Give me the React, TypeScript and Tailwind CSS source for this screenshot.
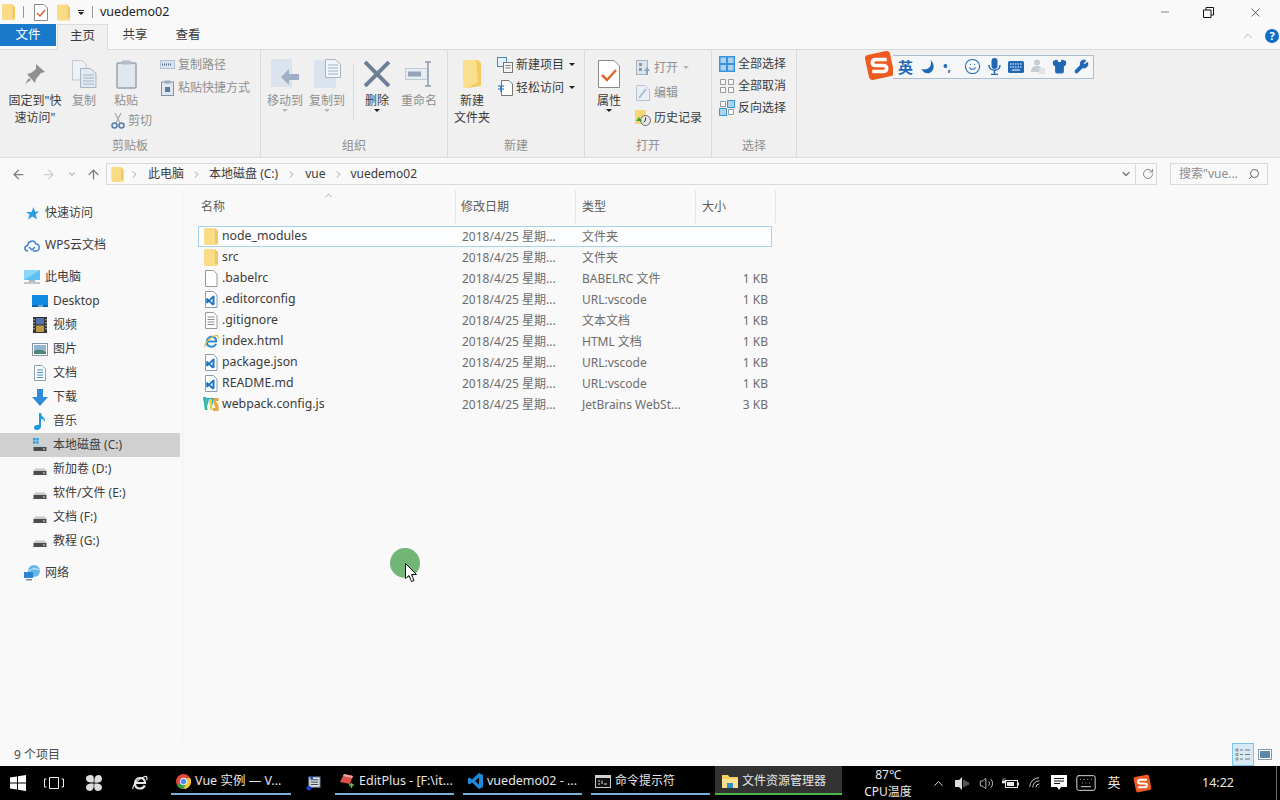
import {
  ArrowLeft, ArrowRight, ArrowUp, ChevronDown, ChevronRight, ChevronUp, Keyboard, Minus,
  RotateCw, Search, Shirt, Smile, Volume2, Wifi, Wrench, X,
} from 'lucide-react';
import type { ReactNode } from 'react';

const font = 'font-["Noto_Sans","Noto_Sans_CJK_SC",sans-serif]';

function Folder({ w = 14, h = 17 }: { w?: number; h?: number }) {
  return (
    <svg width={w} height={h} viewBox="0 0 14 17" className="shrink-0">
      <path d="M0 1.5 Q0 0 1.5 0 H11 V15 L14 15 V17 H2 Q0 17 0 15 Z" fill="#f9dc85" />
      <path d="M11 0 L14 3 V15 H11 Z" fill="#f3c85f" />
    </svg>
  );
}

function FileDoc({ lines = false }: { lines?: boolean }) {
  return (
    <svg width="14" height="17" viewBox="0 0 14 17" className="shrink-0">
      <path d="M1.5.5 H9.5 L13 4 V16.5 H1.5 Z" fill="#fff" stroke="#9a9a9a" />
      {lines && <path d="M3.5 5 H10.5 M3.5 7.5 H10.5 M3.5 10 H10.5 M3.5 12.5 H10.5" stroke="#8a8a8a" />}
    </svg>
  );
}

function VsFile() {
  return (
    <svg width="14" height="17" viewBox="0 0 14 17" className="shrink-0">
      <path d="M1.5.5 H9.5 L13 4 V16.5 H1.5 Z" fill="#fff" stroke="#8d9bab" />
      <path d="M10.5 4.5 V13.5 L8.5 14.5 L5 11 L3.2 12.5 L2.2 12 V7.5 L3.2 7 L5 8.5 L8.5 5 Z" fill="#1976c4" />
      <path d="M8.5 7.5 L6.3 9.7 L8.5 11.8 Z" fill="#fff" />
    </svg>
  );
}

function IeIcon({ size = 16, color = '#2b8fd6' }: { size?: number; color?: string }) {
  return (
    <svg width={size} height={size} viewBox="0 0 16 16" className="shrink-0">
      <path d="M3 8 H13 C13 4.5 10.5 3 8 3 C5 3 3 5.5 3 8.5 C3 11.5 5 13.5 8 13.5 C10 13.5 11.8 12.5 12.8 10.5" fill="none" stroke={color} strokeWidth="2.2" />
      <path d="M1 14 C0 11 5 4 13 1.5 C15 1 15.5 3 14.5 5" fill="none" stroke={color === '#2b8fd6' ? '#e6b93a' : color} strokeWidth="1.2" />
    </svg>
  );
}

function WsIcon() {
  return (
    <svg width="16" height="15" viewBox="0 0 16 15" className="shrink-0">
      <path d="M0 0 H3 L4.5 9 L6 2 H8.5 L9.5 9 L11 1 Z" fill="#25a8c9" />
      <path d="M0 0 H3 L4.5 13 H2 Z" fill="#28b8a8" />
      <path d="M6 2 H8.5 L9.5 13 H7.5 Z" fill="#e5d13b" />
      <path d="M11 1 H15.5 V4 H12.5 L15.5 8 V14 H10 V11 H12.5 L10.5 6 Z" fill="#e8a93a" />
    </svg>
  );
}

function Drive({ win = false }: { win?: boolean }) {
  return (
    <svg width="16" height="16" viewBox="0 0 16 16" className="shrink-0">
      {win && <path d="M1 1 H3.5 V3.5 H1 Z M4.2 1 H6.7 V3.5 H4.2 Z M1 4.2 H3.5 V6.7 H1 Z M4.2 4.2 H6.7 V6.7 H4.2 Z" fill="#2aa3dc" />}
      {!win && <path d="M2 10 C2 8 3 7.5 4 7.5 H12 C13 7.5 14 8 14 10 Z" fill="#c7c7c7" />}
      {win && <path d="M2 10 L3 8 H13 L14 10 Z" fill="#b9cfdb" />}
      <rect x="1.5" y="10" width="13" height="4" fill="#4c4c4c" />
      <rect x="11" y="11.5" width="2" height="1" fill="#e8e8e8" />
    </svg>
  );
}

const navIcons: Record<string, ReactNode> = {
  desktop: (
    <svg width="16" height="14" viewBox="0 0 16 14"><rect width="16" height="12" y="1" fill="#0f8be0" /><rect y="11" width="16" height="2" fill="#0b67ad" /><path d="M6 12 H11" stroke="#cfe9fb" /></svg>
  ),
  video: (
    <svg width="14" height="16" viewBox="0 0 14 16"><rect width="14" height="16" fill="#333" /><rect x="3" y="1" width="8" height="6.5" fill="#5470a8" /><rect x="3" y="8.5" width="8" height="6.5" fill="#b89c45" /><path d="M1 2 V14 M13 2 V14" stroke="#ddd" strokeDasharray="1.5 1.5" /></svg>
  ),
  image: (
    <svg width="16" height="13" viewBox="0 0 16 13"><rect x=".5" y=".5" width="15" height="12" fill="#fff" stroke="#8a97a5" /><rect x="2" y="2" width="12" height="9" fill="#8fb4d4" /><path d="M2 8 Q8 5 14 9 V11 H2 Z" fill="#4e8472" /></svg>
  ),
  doc: (
    <svg width="12" height="16" viewBox="0 0 12 16"><path d="M.5.5 H8 L11.5 4 V15.5 H.5 Z" fill="#fff" stroke="#8ea0b2" /><path d="M3 5 H9 M3 7.5 H9 M3 10 H9 M3 12.5 H9" stroke="#3c8dc9" /></svg>
  ),
  down: (
    <svg width="16" height="17" viewBox="0 0 16 17"><path d="M5 0 H11 V8 H16 L8 17 L0 8 H5 Z" fill="#2f8ad8" /></svg>
  ),
  music: (
    <svg width="12" height="17" viewBox="0 0 12 17"><path d="M5 0 H7 C7 4 12 4.5 11 9 C10 6.5 8.5 6 7 6 V13.5 C7 16 4.5 17 2.5 17 C0.5 17 0 15.5 0 14.5 C0 12.5 3 11.5 5 12 Z" fill="#1f9ae0" /></svg>
  ),
  star: (
    <svg width="14" height="13" viewBox="0 0 14 13"><path d="M8.5 0 L10 4.5 H14 L10.8 7.3 L12 12.5 L7.5 9.5 L3 12.5 L4.5 7.5 L1 5 H6.5 Z" fill="#2f9fe3" /></svg>
  ),
  cloud: (
    <svg width="16" height="13" viewBox="0 0 16 13"><path d="M4 12 C0 12 0 7 3.5 6.5 C4 2 10 0 12 5 C16 5 16.5 12 12 12 H9" fill="none" stroke="#3d80d8" strokeWidth="1.5" /><path d="M5 8 L8 11 L11 8" fill="none" stroke="#3d80d8" strokeWidth="1.5" /></svg>
  ),
  pc: (
    <svg width="16" height="14" viewBox="0 0 16 14"><rect width="16" height="10" fill="#5cc0f2" /><path d="M0 0 H16 L0 10 Z" fill="#8bd6f8" /><rect x="5" y="10" width="6" height="2" fill="#a8b8c4" /><rect y="12.5" width="16" height="1" fill="#8d98a3" /></svg>
  ),
  net: (
    <svg width="16" height="16" viewBox="0 0 16 16"><circle cx="10" cy="6" r="6" fill="#68b6e8" /><path d="M5 6 Q10 2 15 5" stroke="#d8eefa" fill="none" /><rect y="7" width="9" height="6" fill="#2a86d1" /><rect x="2" y="14" width="6" height="1.5" fill="#7c8a96" /></svg>
  ),
};

const navItems = [
  { icon: 'star', label: '快速访问', top: 0, child: false },
  { icon: 'cloud', label: 'WPS云文档', top: 8, child: false },
  { icon: 'pc', label: '此电脑', top: 8, child: false },
  { icon: 'desktop', label: 'Desktop', top: 0, child: true },
  { icon: 'video', label: '视频', top: 0, child: true },
  { icon: 'image', label: '图片', top: 0, child: true },
  { icon: 'doc', label: '文档', top: 0, child: true },
  { icon: 'down', label: '下载', top: 0, child: true },
  { icon: 'music', label: '音乐', top: 0, child: true },
  { icon: 'c', label: '本地磁盘 (C:)', top: 0, child: true },
  { icon: 'd', label: '新加卷 (D:)', top: 0, child: true },
  { icon: 'd', label: '软件/文件 (E:)', top: 0, child: true },
  { icon: 'd', label: '文档 (F:)', top: 0, child: true },
  { icon: 'd', label: '教程 (G:)', top: 0, child: true },
  { icon: 'net', label: '网络', top: 8, child: false },
];

const files: { name: string; type: string; size: string; icon: ReactNode }[] = [
  { name: 'node_modules', type: '文件夹', size: '', icon: <Folder /> },
  { name: 'src', type: '文件夹', size: '', icon: <Folder /> },
  { name: '.babelrc', type: 'BABELRC 文件', size: '1 KB', icon: <FileDoc /> },
  { name: '.editorconfig', type: 'URL:vscode', size: '1 KB', icon: <VsFile /> },
  { name: '.gitignore', type: '文本文档', size: '1 KB', icon: <FileDoc lines /> },
  { name: 'index.html', type: 'HTML 文档', size: '1 KB', icon: <IeIcon size={15} /> },
  { name: 'package.json', type: 'URL:vscode', size: '1 KB', icon: <VsFile /> },
  { name: 'README.md', type: 'URL:vscode', size: '1 KB', icon: <VsFile /> },
  { name: 'webpack.config.js', type: 'JetBrains WebSt...', size: '3 KB', icon: <WsIcon /> },
];

function Caret({ dark = false }: { dark?: boolean }) {
  return <span className={`block h-0 w-0 border-x-[3px] border-t-[3px] border-x-transparent ${dark ? 'border-t-[#222]' : 'border-t-[#b5b5b5]'}`} />;
}

function BigButton({ w, icon, lines, caret, dim }: { w: number; icon: ReactNode; lines: string[]; caret?: 'dark' | 'light'; dim?: boolean }) {
  return (
    <div className="flex shrink-0 flex-col items-center" style={{ width: w }}>
      <div className="flex h-[36px] items-center justify-center">{icon}</div>
      <div className={`text-center text-[12px] leading-[17px] whitespace-nowrap ${dim ? 'text-[#8f8f8f]' : 'text-[#3b3b3b]'}`}>
        {lines.map((l) => (
          <div key={l}>{l}</div>
        ))}
      </div>
      {caret && <Caret dark={caret === 'dark'} />}
    </div>
  );
}

function SmallRow({ icon, label, h, dim, caret, lightCaret }: { icon: ReactNode; label: string; h: number; dim?: boolean; caret?: boolean; lightCaret?: boolean }) {
  return (
    <div className="flex items-center" style={{ height: h }}>
      <span className="flex w-[16px] shrink-0 justify-center">{icon}</span>
      <span className={`ml-[3px] text-[12px] whitespace-nowrap ${dim ? 'text-[#8f8f8f]' : 'text-[#3b3b3b]'}`}>{label}</span>
      {caret && <span className="ml-[5px]"><Caret dark /></span>}
      {lightCaret && <span className="ml-[5px]"><Caret /></span>}
    </div>
  );
}

function Group({ w, label, children }: { w: number; label: string; children: ReactNode }) {
  return (
    <div className="flex shrink-0 flex-col border-r border-[#dadada]" style={{ width: w }}>
      <div className="flex flex-1">{children}</div>
      <div className="mb-[3px] h-[17px] text-center text-[12px] leading-[17px] text-[#8f8f8f]">{label}</div>
    </div>
  );
}

function TaskItem({ w, ml, icon, label, active, cjk }: { w: number; ml: number; icon: ReactNode; label: string; active?: boolean; cjk?: boolean }) {
  return (
    <div
      className={`flex h-[29px] shrink-0 items-center border-b-2 pl-[4px] pt-[3px] ${active ? 'border-[#4cb848] bg-[#333] pl-[7px]' : 'border-[#76b0dc]'}`}
      style={{ width: w, marginLeft: ml }}
    >
      <span className="flex w-[16px] shrink-0 justify-center">{icon}</span>
      <span className={`ml-[4px] whitespace-nowrap text-[#e6e6e6] ${cjk ? 'text-[12px]' : 'text-[12.5px]'}`}>{label}</span>
    </div>
  );
}

function Tray({ w, children }: { w: number; children: ReactNode }) {
  return (
    <div className="flex h-full shrink-0 items-center justify-center text-[#e8e8e8]" style={{ width: w }}>
      {children}
    </div>
  );
}

function SogouS({ size }: { size: number }) {
  return (
    <svg width={size} height={size} viewBox="0 0 28 28">
      <rect x="2.5" y="2.5" width="23" height="23" rx="3" fill="#ef5a1f" transform="rotate(-12 14 14)" />
      <path d="M20.5 8.5 H11 Q7.5 8.5 7.5 11.5 Q7.5 14 11 14 H17 Q20.5 14 20.5 16.5 Q20.5 19.5 17 19.5 H7.5" fill="none" stroke="#fff" strokeWidth="3.2" />
    </svg>
  );
}

export default function App() {
  return (
    <div className={`relative flex h-[800px] w-[1280px] flex-col overflow-hidden bg-[#f9f9f9] ${font}`}>
      {/* title bar */}
      <div className="flex h-[24px] shrink-0 items-center">
        <span className="ml-[2px]"><Folder w={13} h={16} /></span>
        <span className="ml-[8px] h-[12px] w-px bg-[#9a9a9a]" />
        <svg width="14" height="17" viewBox="0 0 14 17" className="ml-[10px]">
          <path d="M.5.5 H10 L13.5 4 V16.5 H.5 Z" fill="#fff" stroke="#8a8a8a" />
          <path d="M3 9 L6 12 L11 6" fill="none" stroke="#d9603a" strokeWidth="1.5" />
        </svg>
        <span className="ml-[9px]"><Folder w={13} h={17} /></span>
        <span className="ml-[8px] flex flex-col items-center gap-[1px]">
          <span className="h-px w-[6px] bg-[#222]" />
          <Caret dark />
        </span>
        <span className="ml-[8px] h-[12px] w-px bg-[#9a9a9a]" />
        <span className="ml-[7px] text-[12.5px] text-[#222]">vuedemo02</span>
        <div className="ml-auto flex items-center">
          <Minus size={12} strokeWidth={1} className="mr-[32px] text-[#111]" />
          <svg width="11" height="11" viewBox="0 0 11 11" className="mr-[34px]">
            <path d="M.5 3 H8 V10.5 H.5 Z M3 3 V.5 H10.5 V8 H8" fill="none" stroke="#111" />
          </svg>
          <X size={15} strokeWidth={1} className="mr-[17px] text-[#111]" />
        </div>
      </div>

      {/* tabs */}
      <div className="relative z-10 -mb-px flex h-[26px] shrink-0 items-stretch text-[12.5px] text-[#3b3b3b]">
        <div className="flex h-[22px] w-[56px] items-center justify-center bg-[#1979ca] text-white">文件</div>
        <div className="ml-px flex w-[51px] items-center justify-center border-x border-t border-[#dadada] bg-[#f0f0f0] pb-[3px]">主页</div>
        <div className="flex w-[54px] items-center justify-center pb-[4px]">共享</div>
        <div className="flex w-[52px] items-center justify-center pb-[4px]">查看</div>
        <div className="ml-auto flex items-center pb-[2px]">
          <ChevronUp size={14} strokeWidth={1.5} className="mr-[10px] text-[#a9a9a9]" />
          <span className="mr-[1px] flex h-[14px] w-[14px] items-center justify-center rounded-full bg-[#0f6fc6] text-[11px] font-bold text-white">?</span>
        </div>
      </div>

      {/* ribbon */}
      <div className="flex h-[109px] shrink-0 border-y border-[#dadada] bg-[#f0f0f0]">
        <Group w={261} label="剪贴板">
          <div className="flex pt-[6px]">
            <div className="ml-[4px]">
              <BigButton
                w={62}
                lines={['固定到"快', '速访问"']}
                icon={
                  <svg width="22" height="22" viewBox="0 0 22 22">
                    <path d="M12 1 L21 9 L17 10 L12 16 L11 20 L3 11 L7 10 L12 6 Z M5 15 L1 21 L7 17 Z" fill="#8f8f8f" />
                  </svg>
                }
              />
            </div>
            <BigButton
              w={36}
              dim
              lines={['复制']}
              icon={
                <svg width="25" height="28" viewBox="0 0 25 28">
                  <path d="M.5.5 H10 L14 4 V20 H.5 Z" fill="#eef1f5" stroke="#c3c9d0" />
                  <path d="M8.5 8.5 H18 L24 13 V27.5 H8.5 Z" fill="#e3e9f1" stroke="#a9b4c0" />
                  <path d="M11 15 H22 M11 18 H22 M11 21 H22 M11 24 H22" stroke="#a3b2c4" />
                </svg>
              }
            />
            <div className="flex w-[53px] flex-col">
              <BigButton
                w={48}
                dim
                lines={['粘贴']}
                icon={
                  <svg width="21" height="29" viewBox="0 0 21 29">
                    <rect x="1" y="3" width="19" height="25" rx="1" fill="#e1e7ef" stroke="#98a2ae" strokeWidth="1.5" />
                    <rect x="6" y="0.5" width="9" height="4" fill="#b4bcc6" />
                  </svg>
                }
              />
              <div className="mt-[3px] flex items-center pl-[9px] text-[12px] leading-[17px] text-[#8f8f8f]">
                <svg width="14" height="16" viewBox="0 0 14 16" className="mr-[3px] shrink-0">
                  <path d="M4 0 L9 10 M10 0 L5 10" stroke="#a5adb6" strokeWidth="1.3" />
                  <circle cx="3.5" cy="12.5" r="2.5" fill="none" stroke="#4f7ea8" strokeWidth="1.5" />
                  <circle cx="10.5" cy="12.5" r="2.5" fill="none" stroke="#4f7ea8" strokeWidth="1.5" />
                </svg>
                剪切
              </div>
            </div>
            <div className="-mt-[3px] flex flex-col pl-[4px]">
              <SmallRow
                h={23}
                dim
                label="复制路径"
                icon={
                  <svg width="15" height="9" viewBox="0 0 15 9"><rect x=".5" y=".5" width="14" height="8" fill="#d7e3f1" stroke="#b2c2d4" /><path d="M2 4.5 H12" stroke="#53718f" strokeDasharray="1 1" strokeWidth="2" /></svg>
                }
              />
              <SmallRow
                h={23}
                dim
                label="粘贴快捷方式"
                icon={
                  <svg width="13" height="16" viewBox="0 0 13 16"><rect x=".5" y="2" width="12" height="13.5" fill="#dfe6ee" stroke="#7f93a8" /><rect x="3.5" y=".5" width="6" height="3" fill="#9eacba" /><path d="M4 7 H9 V12 H4 Z" fill="#5a7c9c" /></svg>
                }
              />
            </div>
          </div>
        </Group>

        <Group w={187} label="组织">
          <div className="flex pl-[3px] pt-[6px]">
            <BigButton
              w={42}
              dim
              caret="light"
              lines={['移动到']}
              icon={
                <svg width="28" height="30" viewBox="0 0 28 30">
                  <rect width="21" height="28" fill="#dbe3ee" />
                  <path d="M28 15 V21 H18 V26 L10 18 L18 10 V15 Z" fill="#9fb0c6" />
                </svg>
              }
            />
            <BigButton
              w={42}
              dim
              caret="light"
              lines={['复制到']}
              icon={
                <svg width="27" height="30" viewBox="0 0 27 30">
                  <rect y="1" width="22" height="28" fill="#dbe3ee" />
                  <path d="M11.5 .5 H21 L26.5 5 V18.5 H11.5 Z" fill="#f2f5f9" stroke="#a9b4c0" />
                  <path d="M14 6 H24 M14 9 H24 M14 12 H24 M14 15 H24" stroke="#9fb0c6" />
                </svg>
              }
            />
            <div className="ml-[5px] mt-[8px] h-[56px] w-px bg-[#dcdcdc]" />
            <BigButton
              w={46}
              caret="dark"
              lines={['删除']}
              icon={
                <svg width="26" height="26" viewBox="0 0 26 26">
                  <path d="M1 1 L25 25 M25 1 L1 25" stroke="#6c7f96" strokeWidth="4" />
                </svg>
              }
            />
            <BigButton
              w={38}
              dim
              lines={['重命名']}
              icon={
                <svg width="28" height="26" viewBox="0 0 28 26">
                  <rect x=".5" y="7.5" width="22" height="11" fill="#e6ecf3" stroke="#c0cad5" />
                  <rect x="3" y="10.5" width="13" height="5" fill="#94a3b5" />
                  <path d="M20 1 H26 M23 1 V25 M20 25 H26" stroke="#8c9aaa" strokeWidth="1.5" />
                </svg>
              }
            />
          </div>
        </Group>

        <Group w={137} label="新建">
          <div className="flex pt-[6px]">
            <BigButton
              w={48}
              lines={['新建', '文件夹']}
              icon={
                <svg width="18" height="28" viewBox="0 0 18 28">
                  <path d="M0 0 H15 L18 3 V26 L4 28 Q0 28 0 24 Z" fill="#f4cb62" />
                  <path d="M0 0 H13 L15 22 L4 28 Q0 28 0 24 Z" fill="#fadf8e" />
                </svg>
              }
            />
            <div className="-mt-[3px] flex flex-col pl-[1px]">
              <SmallRow
                h={23}
                caret
                label="新建项目"
                icon={
                  <svg width="16" height="16" viewBox="0 0 16 16"><rect x=".5" y=".5" width="9" height="9" fill="#e8f2fb" stroke="#4a87bd" /><rect x="6.5" y="5.5" width="9" height="10" fill="#f6f6f6" stroke="#777" /><path d="M8.5 8.5 H13.5 M8.5 11 H13.5" stroke="#777" /></svg>
                }
              />
              <SmallRow
                h={23}
                caret
                label="轻松访问"
                icon={
                  <svg width="15" height="16" viewBox="0 0 15 16"><path d="M3.5 .5 H11 L14.5 4 V15.5 H3.5 Z" fill="#fff" stroke="#777" /><path d="M0 6 H6 M0 9 H6 M3 6 V12" stroke="#1f6fb5" strokeWidth="1.2" /></svg>
                }
              />
            </div>
          </div>
        </Group>

        <Group w={127} label="打开">
          <div className="flex pt-[6px]">
            <BigButton
              w={48}
              caret="dark"
              lines={['属性']}
              icon={
                <svg width="22" height="28" viewBox="0 0 22 28">
                  <path d="M.5.5 H16 L21.5 6 V27.5 H.5 Z" fill="#fff" stroke="#8a8a8a" />
                  <path d="M4 15 L9 20 L18 10" fill="none" stroke="#dd6a2c" strokeWidth="2.5" />
                </svg>
              }
            />
            <div className="-mt-[1px] flex flex-col pl-[2px]">
              <SmallRow
                h={25}
                dim
                lightCaret
                label="打开"
                icon={
                  <svg width="14" height="16" viewBox="0 0 14 16"><rect x=".5" y=".5" width="11" height="14" fill="#dce3ec" stroke="#a7b2bf" /><path d="M3 3 H6 V6 H3 Z M3 8 H6 V11 H3 Z" fill="#8b9aab" /><path d="M11 7 L14 11 H12 V15 H10 V11 H8 Z" fill="#8ea3bb" /></svg>
                }
              />
              <SmallRow
                h={25}
                dim
                label="编辑"
                icon={
                  <svg width="14" height="16" viewBox="0 0 14 16"><path d="M.5.5 H9 L13.5 5 V15.5 H.5 Z" fill="#eaf0f6" stroke="#b7c3d0" /><path d="M3 13 L10 4" stroke="#a9bcd2" strokeWidth="2" /></svg>
                }
              />
              <SmallRow
                h={25}
                label="历史记录"
                icon={
                  <svg width="16" height="16" viewBox="0 0 16 16"><rect width="11" height="14" fill="#f7d774" /><circle cx="10.5" cy="10.5" r="5" fill="#e8e8e8" stroke="#6c6c6c" /><path d="M10.5 7.5 V10.5 L8.5 12" stroke="#333" fill="none" /><path d="M1 11 L4 7 L7 11 Z" fill="#37a532" /></svg>
                }
              />
            </div>
          </div>
        </Group>

        <Group w={85} label="选择">
          <div className="flex flex-col pl-[7px] pt-[3px]">
            <SmallRow
              h={22}
              label="全部选择"
              icon={
                <svg width="16" height="16" viewBox="0 0 16 16"><rect width="16" height="16" fill="#3a94d9" /><path d="M1.5 1.5 H7 V7 H1.5 Z M9 1.5 H14.5 V7 H9 Z M1.5 9 H7 V14.5 H1.5 Z M9 9 H14.5 V14.5 H9 Z" fill="#a9d3f1" /></svg>
              }
            />
            <SmallRow
              h={22}
              label="全部取消"
              icon={
                <svg width="16" height="16" viewBox="0 0 16 16"><path d="M1.5 1.5 H6.5 V6.5 H1.5 Z M9.5 1.5 H14.5 V6.5 H9.5 Z M1.5 9.5 H6.5 V14.5 H1.5 Z M9.5 9.5 H14.5 V14.5 H9.5 Z" fill="#fafafa" stroke="#9a9a9a" /></svg>
              }
            />
            <SmallRow
              h={22}
              label="反向选择"
              icon={
                <svg width="16" height="16" viewBox="0 0 16 16"><path d="M1.5 1.5 H6.5 V6.5 H1.5 Z M9.5 9.5 H14.5 V14.5 H9.5 Z" fill="#fafafa" stroke="#9a9a9a" /><path d="M8.5 .5 H15.5 V7.5 H8.5 Z M.5 8.5 H7.5 V15.5 H.5 Z" fill="#a9d3f1" stroke="#3a94d9" /></svg>
              }
            />
          </div>
        </Group>
      </div>

      {/* address bar */}
      <div className="flex h-[32px] shrink-0 items-center text-[#8c8c8c]">
        <ArrowLeft size={15} className="ml-[11px] shrink-0 text-[#7a7a7a]" />
        <ArrowRight size={15} className="ml-[15px] shrink-0 text-[#cfcfcf]" />
        <ChevronDown size={10} strokeWidth={2.5} className="ml-[11px] shrink-0 text-[#a0a0a0]" />
        <ArrowUp size={15} className="ml-[9px] shrink-0 text-[#7a7a7a]" />
        <div className="ml-[5px] flex h-[22px] w-[1051px] shrink-0 items-center border border-[#d9d9d9] text-[12px] text-[#3b3b3b]">
          <span className="ml-[4px]"><Folder w={13} h={15} /></span>
          <ChevronRight size={11} strokeWidth={1.5} className="ml-[5px] text-[#777]" />
          <span className="ml-[8px]">此电脑</span>
          <ChevronRight size={11} strokeWidth={1.5} className="ml-[7px] text-[#777]" />
          <span className="ml-[7px]">本地磁盘 (C:)</span>
          <ChevronRight size={11} strokeWidth={1.5} className="ml-[8px] text-[#777]" />
          <span className="ml-[8px]">vue</span>
          <ChevronRight size={11} strokeWidth={1.5} className="ml-[8px] text-[#777]" />
          <span className="ml-[6px]">vuedemo02</span>
          <ChevronDown size={12} strokeWidth={2.5} className="ml-auto mr-[3px] text-[#777]" />
          <span className="h-full w-px bg-[#d9d9d9]" />
          <RotateCw size={12} strokeWidth={2} className="ml-[6px] mr-[2px] text-[#888]" />
        </div>
        <div className="ml-[13px] flex h-[22px] w-[98px] shrink-0 items-center border border-[#d9d9d9] pl-[8px] text-[12px] text-[#8c8c8c]">
          搜索"vue...
          <Search size={12} strokeWidth={2} className="ml-auto mr-[7px] -scale-x-100 text-[#666]" />
        </div>
      </div>

      {/* content */}
      <div className="flex min-h-0 flex-1">
        <aside className="flex w-[183px] shrink-0 flex-col border-r border-[#f0f0f0] pt-[11px]">
          {navItems.map((n) => {
            const selected = n.icon === 'c';
            const icon = n.icon === 'c' ? <Drive win /> : n.icon === 'd' ? <Drive /> : navIcons[n.icon];
            return (
              <div
                key={n.label}
                className={`flex h-[24px] shrink-0 items-center text-[12px] text-[#3b3b3b] ${selected ? 'w-[180px] bg-[#d0d0d0]' : ''}`}
                style={{ marginTop: n.top, paddingLeft: n.child ? 32 : 24 }}
              >
                <span className="flex w-[16px] shrink-0 justify-center">{icon}</span>
                <span className="ml-[5px]">{n.label}</span>
              </div>
            );
          })}
        </aside>

        <main className="min-w-0 flex-1 pl-[15px]">
          <div className="relative flex h-[36px] w-[578px] text-[12px] text-[#5c5c5c]">
            <ChevronUp size={11} strokeWidth={1.5} className="absolute left-[125px] top-0 text-[#888]" />
            <div className="h-[33px] w-[258px] border-r border-[#e5e5e5] pl-[3px] leading-[33px]">名称</div>
            <div className="h-[33px] w-[120px] border-r border-[#e5e5e5] pl-[5px] leading-[33px]">修改日期</div>
            <div className="h-[33px] w-[120px] border-r border-[#e5e5e5] pl-[6px] leading-[33px]">类型</div>
            <div className="h-[33px] w-[80px] border-r border-[#e5e5e5] pl-[6px] leading-[33px]">大小</div>
          </div>
          {files.map((f, i) => (
            <div
              key={f.name}
              className={`flex h-[21px] w-[574px] items-center border text-[12.3px] ${i === 0 ? 'border-[#a8d2ea] bg-[#fbfdfe]' : 'border-transparent'}`}
            >
              <span className="ml-[4px] flex w-[16px] shrink-0 justify-center">{f.icon}</span>
              <span className="ml-[3px] w-[240px] shrink-0 text-[#3b3b3b]">{f.name}</span>
              <span className="w-[120px] shrink-0 text-[12px] text-[#6d6d6d]">2018/4/25 星期...</span>
              <span className="w-[120px] shrink-0 whitespace-nowrap text-[12px] text-[#6d6d6d]">{f.type}</span>
              <span className="w-[66px] shrink-0 text-right text-[12px] text-[#6d6d6d]">{f.size}</span>
            </div>
          ))}
        </main>
      </div>

      {/* status bar */}
      <div className="flex h-[24px] shrink-0 items-center pl-[14px] text-[12px] text-[#4a4a4a]">
        <span className="pt-[1px]">9 个项目</span>
        <div className="ml-auto flex items-center">
          <div className="flex h-[23px] w-[22px] items-center justify-center border border-[#7ec4e6] bg-[#d5eaf5]">
            <svg width="16" height="13" viewBox="0 0 16 13"><path d="M1 1 H3 V3 H1 Z M1 5.5 H3 V7.5 H1 Z M1 10 H3 V12 H1 Z" fill="none" stroke="#777" strokeWidth=".8" /><path d="M5 2 H8 M10 2 H15 M5 6.5 H8 M10 6.5 H15 M5 11 H8 M10 11 H15" stroke="#777" /></svg>
          </div>
          <svg width="14" height="11" viewBox="0 0 14 11" className="ml-[4px] mr-[8px]"><rect x=".5" y=".5" width="13" height="10" fill="#fff" stroke="#8a97a5" /><rect x="2" y="2" width="10" height="7" fill="#5b87a8" /></svg>
        </div>
      </div>

      {/* taskbar */}
      <div className="flex h-[34px] shrink-0 bg-black">
        <Tray w={36}>
          <svg width="16" height="16" viewBox="0 0 16 16"><path d="M0 2.5 L7 1.5 V7.5 H0 Z M8 1.3 L16 0 V7.5 H8 Z M0 8.5 H7 V14.5 L0 13.5 Z M8 8.5 H16 V16 L8 14.7 Z" fill="#fff" /></svg>
        </Tray>
        <Tray w={36}>
          <svg width="20" height="14" viewBox="0 0 20 14"><path d="M5.5 1.5 H14.5 V12.5 H5.5 Z M2.5 3 H.5 V11 H2.5 M17.5 3 H19.500 V11 H17.5" fill="none" stroke="#eee" /></svg>
        </Tray>
        <Tray w={44}>
          <svg width="16" height="16" viewBox="0 0 16 16"><path d="M7.5 7.5 C3 8 0 6.500 0 3.500 C0 0.500 3 0 5 0 C7.500 0 8.500 3 7.500 7.500 Z M8.500 7.500 C8 3 9.500 0 12.500 0 C15 0 16 2 16 4 C16 6.500 13 8.500 8.500 7.500 Z M7.500 8.500 C3 8 0 9.500 0 12.500 C0 15 2 16 4 16 C6.500 16 8.500 13 7.500 8.500 Z M8.500 8.500 C13 8 16 9.500 16 12.500 C16 15 14 16 11.500 16 C9 16 7.500 13 8.500 8.500 Z" fill="#dcdcdc" /></svg>
        </Tray>
        <Tray w={48}>
          <IeIcon size={16} color="#e8e8e8" />
        </Tray>
        <TaskItem
          w={120}
          ml={7}
          label="Vue 实例 — V..."
          icon={
            <svg width="15" height="15" viewBox="0 0 16 16">
              <circle cx="8" cy="8" r="8" fill="#e0483c" />
              <path d="M8 8 L1 12 A8 8 0 0 0 11 15.4 Z" fill="#2fa14a" />
              <path d="M8 4.5 H15.3 A8 8 0 0 1 8 16 L11 9 Z" fill="#f7c52e" />
              <circle cx="8" cy="8" r="3.5" fill="#4a8af4" stroke="#fff" />
            </svg>
          }
        />
        <Tray w={44}>
          <svg width="15" height="15" viewBox="0 0 16 16"><rect x="3" y="1" width="12" height="11" fill="#dbe2ea" stroke="#5b6f86" /><path d="M5 4 H13 M5 6.5 H13 M5 9 H13" stroke="#333" /><circle cx="3" cy="13" r="2.5" fill="#1a3fd0" /><circle cx="6" cy="2" r="1.5" fill="#1a3fd0" /></svg>
        </Tray>
        <TaskItem
          w={119}
          ml={0}
          label="EditPlus - [F:\it..."
          icon={
            <svg width="16" height="16" viewBox="0 0 16 16"><path d="M5 1 L14 3 L11 11 L1 9 Z" fill="#d9534a" /><path d="M5 1 L14 3 L13 5 L4 3 Z" fill="#f0a39c" /><path d="M10 12 H15 M12.5 10 V15" stroke="#6fbf4a" strokeWidth="1.5" /></svg>
          }
        />
        <TaskItem
          w={119}
          ml={9}
          label="vuedemo02 - ..."
          icon={
            <svg width="15" height="16" viewBox="0 0 15 16"><path d="M11 0 L15 2 V14 L11 16 L4 9.5 L1.5 11.5 L0 10.5 V5.5 L1.5 4.5 L4 6.5 Z M11 4.5 L7 8 L11 11.5 Z" fill="#1f8ad8" fillRule="evenodd" /></svg>
          }
        />
        <TaskItem
          w={119}
          ml={9}
          cjk
          label="命令提示符"
          icon={
            <svg width="16" height="13" viewBox="0 0 16 13"><rect x=".5" y=".5" width="15" height="12" fill="#111" stroke="#cfcfcf" /><rect x="1" y="1" width="14" height="2" fill="#cfcfcf" /><path d="M3 6 H5 M3 9 H5 M7 5.5 V9 M9 9 H12" stroke="#ddd" /></svg>
          }
        />
        <TaskItem
          w={127}
          ml={5}
          active
          cjk
          label="文件资源管理器"
          icon={
            <svg width="16" height="15" viewBox="0 0 16 15"><path d="M0 1 H6 L7.5 3 H16 V14 H0 Z" fill="#f7cf63" /><rect y="5" width="16" height="9" fill="#fbe08f" /><path d="M5 14 V9 H11 V14" fill="#2f8fc9" /></svg>
          }
        />
        <div className="ml-[16px] flex w-[60px] shrink-0 flex-col items-center justify-center text-[12px] leading-[17px] text-[#e8e8e8]">
          <span>87℃</span>
          <span className="whitespace-nowrap">CPU温度</span>
        </div>
        <div className="ml-[8px] flex">
          <Tray w={24}><ChevronUp size={15} strokeWidth={1.5} /></Tray>
          <Tray w={24}>
            <svg width="15" height="13" viewBox="0 0 15 13"><path d="M0 3 H4 L7 0 V13 L4 10 H0 Z" fill="#ddd" /><path d="M9 3 V10 M11 4 V9 M13 5 V8" stroke="#aaa" /></svg>
          </Tray>
          <Tray w={24}><Volume2 size={15} strokeWidth={1.3} /></Tray>
          <Tray w={24}>
            <svg width="17" height="13" viewBox="0 0 17 13"><rect x="3.5" y="3.5" width="12" height="7" fill="none" stroke="#e8e8e8" /><rect x="5" y="5" width="7" height="4" fill="#e8e8e8" /><rect x="15.5" y="5.5" width="1.5" height="3" fill="#e8e8e8" /><path d="M1 1 V4 M3 1 V4 M0 4 H4 V6 H0 Z" fill="#e8e8e8" stroke="#e8e8e8" strokeWidth=".6" /></svg>
          </Tray>
          <span className="w-px" />
          <Tray w={24}><Wifi size={15} strokeWidth={1.3} className="-rotate-45" /></Tray>
          <Tray w={24}>
            <svg width="16" height="16" viewBox="0 0 16 16"><path d="M0 0 H16 V12 H10 L8 15 L6 12 H0 Z" fill="#fff" /><path d="M3 3.5 H13 M3 6 H13 M3 8.5 H9" stroke="#111" /></svg>
          </Tray>
          <Tray w={30}><Keyboard size={22} strokeWidth={1} /></Tray>
          <Tray w={26}><span className="text-[13px]">英</span></Tray>
          <Tray w={30}><SogouS size={19} /></Tray>
          <Tray w={119}><span className="ml-[3px] text-[12.5px]">14:22</span></Tray>
        </div>
        <div className="w-px bg-[#666]" />
      </div>

      {/* sogou input bar floats over the ribbon */}
      <div className="absolute left-[864px] top-[50px] flex items-center">
        <SogouS size={31} />
        <div className="-ml-[2px] mt-[2px] flex h-[24px] w-[201px] items-center border border-l-0 border-[#a9bed0] bg-[#f4f6f8] text-[#2068b4]">
          <span className="ml-[5px] w-[18px] text-[15px] leading-[20px] font-bold">英</span>
          <svg width="14" height="14" viewBox="0 0 14 14" className="ml-[5px]">
            <path d="M9.5 0 C11 4 9.5 9 3 9.5 L0.5 9 C2 12.5 5.5 14 8.500 13 C13 11.500 14.500 4 9.500 0 Z" fill="#2068b4" />
          </svg>
          <span className="ml-[8px] w-[14px] text-[12px] font-bold leading-[10px]">•,</span>
          <Smile size={17} strokeWidth={1.5} className="ml-[7px]" />
          <svg width="13" height="17" viewBox="0 0 13 17" className="ml-[7px]">
            <rect x="3.500" y="0" width="6" height="11" rx="3" fill="#2068b4" />
            <path d="M1 7 C1 14 12 14 12 7 M6.500 12 V16 M3 16.500 H10" fill="none" stroke="#2068b4" strokeWidth="1.500" />
          </svg>
          <svg width="16" height="12" viewBox="0 0 16 12" className="ml-[7px]">
            <rect width="16" height="12" rx="1.500" fill="#2068b4" />
            <path d="M2 3 H14 M2 6 H14" stroke="#fff" strokeDasharray="1.500 1" />
            <path d="M4 9 H12" stroke="#fff" />
          </svg>
          <svg width="14" height="15" viewBox="0 0 14 15" className="ml-[7px]"><circle cx="6" cy="3.5" r="3" fill="#c5ccd3" /><path d="M0 13 C0 8 3 7 6 7 C9 7 11 8 11 13 Z" fill="#c5ccd3" /><rect x="8" y="9" width="6" height="6" fill="#dfe3e7" /></svg>
          <Shirt size={15} fill="#2068b4" className="ml-[7px]" />
          <Wrench size={15} fill="#2068b4" className="ml-[7px]" />
        </div>
      </div>

      {/* recording cursor highlight */}
      <div className="absolute left-[390px] top-[548px] h-[30px] w-[30px] rounded-full bg-[#71b577]" />
      <svg width="13" height="20" viewBox="0 0 13 20" className="absolute left-[405px] top-[563px]">
        <path d="M.5.5 V15.5 L4 12.5 L6.5 18.5 L9 17.5 L6.5 11.5 H11.5 Z" fill="#fff" stroke="#111" />
      </svg>
    </div>
  );
}
